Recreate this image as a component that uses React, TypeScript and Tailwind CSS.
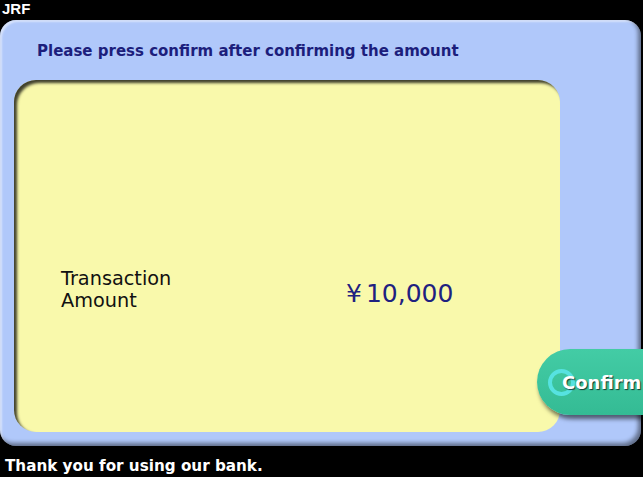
export default function App() {
  return (
    <div className="relative h-[477px] w-[643px] overflow-hidden bg-black font-['DejaVu_Sans',Verdana,sans-serif]">
      <div className="h-[20px] pl-[2px] font-['Liberation_Sans',Arial,sans-serif] text-[15px] leading-[18px] font-bold text-white">
        JRF
      </div>

      <div className="h-[426px] w-[641px] rounded-[16px] bg-[#b0c8fa] pt-[20px] pl-[14px] shadow-[inset_-3px_-3px_4px_rgba(0,0,0,0.45),inset_2px_2px_2px_rgba(255,255,255,0.5)]">
        <p className="pl-[23px] text-[15px] leading-[22px] font-bold text-[#1c1e7c]">
          Please press confirm after confirming the amount
        </p>

        <div className="mt-[18px] h-[352px] w-[546px] rounded-[22px] bg-[#f9f9ab] pt-[188px] pl-[47px] shadow-[inset_3px_3px_3px_rgba(0,0,0,0.75)]">
          <div className="grid grid-cols-[285px_1fr] items-center">
            <div className="text-[19.3px] leading-[22px] text-[#111]">
              Transaction
              <br />
              Amount
            </div>
            <div className="mt-[6px] flex items-baseline gap-[4px] text-[25px] leading-none text-[#1f2180]">
              <span>¥</span>
              <span>10,000</span>
            </div>
          </div>
        </div>
      </div>

      <div className="pt-[10px] pl-[5px] text-[15.2px] leading-[20px] font-bold text-white">
        Thank you for using our bank.
      </div>

      <div className="absolute top-[349px] left-[537px] flex h-[66px] w-[120px] items-center rounded-l-[33px] bg-gradient-to-b from-[#43cca5] to-[#34bb94] shadow-[2px_4px_4px_rgba(0,0,0,0.55)]">
        <div className="absolute top-[20px] left-[11px] h-[27px] w-[27px] rounded-full border-[4px] border-[#56e2e0]" />
        <span className="relative pl-[25px] text-[18px] font-bold text-white [text-shadow:1px_1px_1px_rgba(0,0,0,0.7)]">
          Confirm
        </span>
      </div>
    </div>
  )
}
